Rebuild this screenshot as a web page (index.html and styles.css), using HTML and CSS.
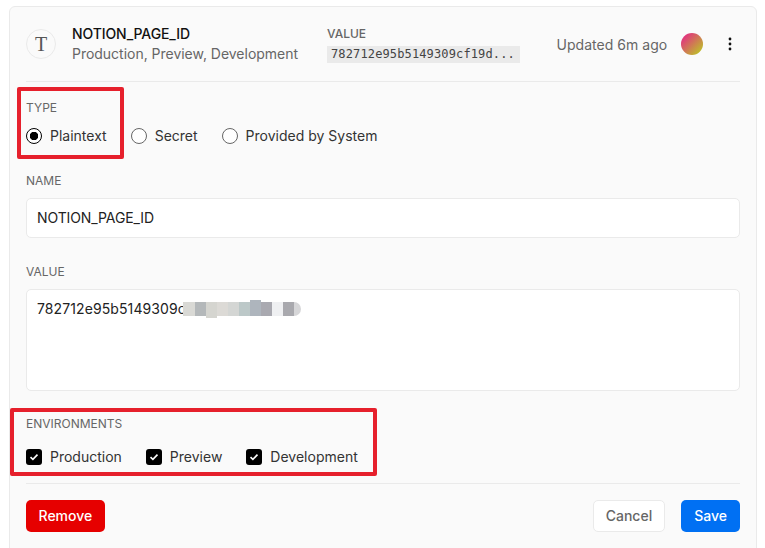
FILE: index.html
```html
<!DOCTYPE html>
<html lang="en">
<head>
  <meta charset="UTF-8" />
  <meta name="viewport" content="width=device-width, initial-scale=1.0" />
  <title>Environment variable</title>
  <link rel="stylesheet" href="styles.css">
</head>
<body>
  <div class="card">
    <div class="summary">
      <div class="type-icon"><span>T</span></div>
      <div class="summary-name">
        <div class="var-name">NOTION_PAGE_ID</div>
        <div class="var-envs">Production, Preview, Development</div>
      </div>
      <div class="summary-value">
        <div class="value-label">VALUE</div>
        <code class="value-code">782712e95b5149309cf19d...</code>
      </div>
      <div class="updated">Updated 6m ago</div>
      <div class="avatar"></div>
      <svg class="more" width="4" height="14" viewBox="0 0 4 14"><circle cx="2" cy="2" r="1.4"/><circle cx="2" cy="7" r="1.4"/><circle cx="2" cy="12" r="1.4"/></svg>
    </div>

    <div class="section section-type">
      <div class="label">TYPE</div>
      <div class="options">
        <label class="option option-plain"><span class="radio checked"></span>Plaintext</label>
        <label class="option option-secret"><span class="radio"></span>Secret</label>
        <label class="option"><span class="radio"></span>Provided by System</label>
      </div>
    </div>

    <div class="section section-name">
      <div class="label">NAME</div>
      <div class="field field-name">NOTION_PAGE_ID</div>
    </div>

    <div class="section section-value">
      <div class="label">VALUE</div>
      <div class="field field-value">
        <span class="value-text">782712e95b5149309c</span>
        <span class="blur">
          <i class="b1"></i><i class="b2"></i><i class="b3"></i><i class="b4"></i><i class="b5"></i><i class="b6"></i><i class="b7"></i><i class="b8"></i><i class="b9"></i><i class="b10"></i><i class="b11"></i>
        </span>
      </div>
    </div>

    <div class="section section-envs">
      <div class="label">ENVIRONMENTS</div>
      <div class="options">
        <label class="option option-prod"><span class="check"><svg width="10" height="8" viewBox="0 0 10 8"><path d="M1.5 4.2 L3.9 6.4 L8.5 1.6" fill="none" stroke="#fff" stroke-width="1.6"/></svg></span>Production</label>
        <label class="option option-prev"><span class="check"><svg width="10" height="8" viewBox="0 0 10 8"><path d="M1.5 4.2 L3.9 6.4 L8.5 1.6" fill="none" stroke="#fff" stroke-width="1.6"/></svg></span>Preview</label>
        <label class="option"><span class="check"><svg width="10" height="8" viewBox="0 0 10 8"><path d="M1.5 4.2 L3.9 6.4 L8.5 1.6" fill="none" stroke="#fff" stroke-width="1.6"/></svg></span>Development</label>
      </div>
    </div>

    <div class="actions">
      <button class="btn btn-remove">Remove</button>
      <div class="actions-right">
        <button class="btn btn-cancel">Cancel</button>
        <button class="btn btn-save">Save</button>
      </div>
    </div>
  </div>

  <!-- annotations on top of the screenshot -->
  <div class="mark mark-type"></div>
  <div class="mark mark-envs"></div>
</body>
</html>
```

FILE: styles.css
```css
* { margin: 0; padding: 0; box-sizing: border-box; }
html, body { width: 100%; height: 100%; overflow: hidden; }
body {
  background: #fff;
  color: #111;
  font-family: Inter, "Liberation Sans", sans-serif;
  font-size: 14px;
  position: relative;
}

.card {
  margin: 6px 8px 0 9px;
  height: 560px;
  padding: 0 16px;
  background: #fafafa;
  border: 1px solid #eaeaea;
  border-radius: 6px;
}

.summary {
  height: 75px;
  display: flex;
  align-items: center;
  border-bottom: 1px solid #eaeaea;
}
.type-icon {
  width: 30px;
  height: 30px;
  border-radius: 50%;
  border: 1px solid #eaeaea;
  display: flex;
  align-items: center;
  justify-content: center;
  color: #555;
  font-family: "Liberation Serif", serif;
  font-size: 20px;
  flex-shrink: 0;
}
.summary-name { margin-left: 16px; width: 255px; }
.var-name { font-weight: 500; line-height: 20px; letter-spacing: -0.1px; }
.var-envs { color: #666; line-height: 20px; letter-spacing: -0.02px; }
.summary-value { width: 230px; margin-top: -1px; }
.value-label { font-size: 12px; font-weight: 500; color: #666; line-height: 18px; }
.value-code {
  display: block;
  width: 193px;
  height: 17px;
  margin-top: 3px;
  padding-left: 4px;
  background: #eaeaea;
  color: #444;
  font-family: "DejaVu Sans Mono", monospace;
  font-size: 12px;
  letter-spacing: 0.13px;
  line-height: 17px;
  white-space: nowrap;
}
.updated { color: #666; white-space: nowrap; margin-left: -0.5px; letter-spacing: 0.03px; }
.avatar {
  width: 22px;
  height: 22px;
  margin-left: 14px;
  border-radius: 50%;
  background: linear-gradient(135deg, #e8198f, #b8d51c);
  flex-shrink: 0;
}
.more { margin-left: 25px; fill: #111; flex-shrink: 0; }

.label { font-size: 12px; color: #666; line-height: 16px; }
.options { display: flex; align-items: center; }
.option { display: flex; align-items: center; color: #333; line-height: 20px; }
.radio {
  width: 16px;
  height: 16px;
  margin-right: 8px;
  border-radius: 50%;
  border: 1px solid #666;
  background: #fff;
}
.radio.checked {
  border: 1.5px solid #000;
  background: radial-gradient(circle, #000 0 4px, #fff 4.5px);
}
.check {
  width: 16px;
  height: 16px;
  margin-right: 8px;
  border-radius: 3px;
  background: #000;
  display: flex;
  align-items: center;
  justify-content: center;
}

.section-type { padding-top: 18px; }
.section-type .options { margin-top: 10px; }
.option-plain { margin-right: 24px; }
.option-secret { margin-right: 24px; }

.section-name { padding-top: 27px; }
.section-value { padding-top: 26px; }
.field {
  margin-top: 9px;
  background: #fff;
  border: 1px solid #eaeaea;
  border-radius: 5px;
  padding: 0 10px;
  color: #111;
}
.field-name { height: 40px; line-height: 38px; color: #222; letter-spacing: -0.1px; }
.field-value {
  height: 102px;
  padding-top: 9px;
  line-height: 20px;
  display: flex;
  align-items: flex-start;
  color: #222;
}
.value-text { letter-spacing: 0.1px; }

/* mosaic that hides the secret part of the value */
.blur { display: flex; height: 14px; margin-top: 3px; margin-left: -3px; }
.blur i { display: block; width: 11px; height: 14px; }
.blur .b1 { background: #d9d9d5; width: 12px; }
.blur .b2 { background: #b4b8ba; }
.blur .b3 { background: #d5d5d0; height: 16px; }
.blur .b4 { background: #dcdad6; }
.blur .b5 { background: #d4d6d4; }
.blur .b6 { background: #bcc8c8; }
.blur .b7 { background: #aeb5bd; height: 16px; margin-top: -2px; }
.blur .b8 { background: #a9a9b0; }
.blur .b9 { background: #eff0f2; }
.blur .b10 { background: #a9a9ae; }
.blur .b11 { background: #d6d6d8; width: 7px; border-radius: 0 7px 7px 0; }

.section-envs { padding-top: 25px; height: 93px; border-bottom: 1px solid #eaeaea; }
.section-envs .options { margin-top: 15px; }
.option-prod { margin-right: 24px; }
.option-prev { margin-right: 24px; }

.actions {
  display: flex;
  justify-content: space-between;
  padding-top: 16px;
}
.actions-right { display: flex; gap: 16px; }
.btn {
  height: 32px;
  border-radius: 5px;
  border: 1px solid transparent;
  font-family: inherit;
  font-size: 14px;
  font-weight: 500;
  padding: 0 12px 1px;
}
.btn-remove { background: #e60000; color: #fff; padding: 0 11.5px 1px; }
.btn-cancel { background: #fff; border-color: #eaeaea; color: #666; }
.btn-save { background: #0070f3; color: #fff; }

.mark {
  position: absolute;
  border: 4px solid #e6202c;
  border-radius: 2px;
  pointer-events: none;
}
.mark-type { left: 17px; top: 87px; width: 107px; height: 72px; }
.mark-envs { left: 10px; top: 408px; width: 367px; height: 68px; }
```
